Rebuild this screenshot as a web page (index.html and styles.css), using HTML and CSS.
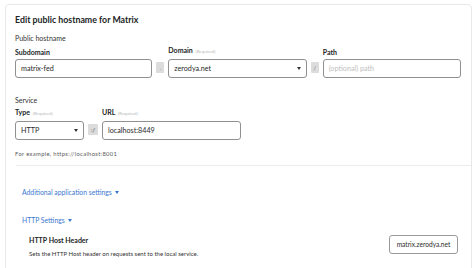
FILE: index.html
```html
<!DOCTYPE html>
<html>
<head>
<meta charset="utf-8">
<link rel="stylesheet" href="styles.css">
</head>
<body>
<div class="card">
  <h1 class="title">Edit public hostname for Matrix</h1>
  <div class="section-label">Public hostname</div>
  <div class="row">
    <div class="field w138">
      <label class="lbl">Subdomain</label>
      <div class="input">matrix-fed</div>
    </div>
    <div class="sep">.</div>
    <div class="field w139">
      <label class="lbl">Domain <span class="req">(Required)</span></label>
      <div class="input select">zerodya.net<span class="caret"></span></div>
    </div>
    <div class="sep">/</div>
    <div class="field w139">
      <label class="lbl">Path</label>
      <div class="input placeholder">(optional) path</div>
    </div>
  </div>

  <div class="section-label service">Service</div>
  <div class="row">
    <div class="field w69">
      <label class="lbl">Type <span class="req">(Required)</span></label>
      <div class="input select">HTTP<span class="caret"></span></div>
    </div>
    <div class="sep wide">://</div>
    <div class="field w139">
      <label class="lbl">URL <span class="req">(Required)</span></label>
      <div class="input">localhost:8449</div>
    </div>
  </div>
  <div class="hint">For example, https://localhost:8001</div>
  <hr class="divider">

  <div class="toggle first">Additional application settings <span class="tri"></span></div>
  <div class="toggle second">HTTP Settings <span class="tri"></span></div>

  <div class="setting">
    <div class="setting-text">
      <div class="setting-name">HTTP Host Header</div>
      <div class="setting-desc">Sets the HTTP Host header on requests sent to the local service.</div>
    </div>
    <div class="input small">matrix.zerodya.net</div>
  </div>
</div>
</body>
</html>
```
FILE: styles.css
```css
* { box-sizing: border-box; }
html, body { margin: 0; padding: 0; background: #fff; }
body {
  font-family: Lato, "Open Sans", sans-serif;
  color: #222426;
  width: 474px;
  height: 268px;
  overflow: hidden;
}
.card {
  margin: 4px 2px 0 5px;
  border: 1px solid #e8e8e8;
  border-radius: 4px;
  padding: 8px 10px 0 9px;
  height: 280px;
}
.title {
  margin: 0;
  font-size: 8.8px;
  font-weight: 700;
  line-height: 14px;
}
.section-label {
  font-size: 7px;
  line-height: 10px;
  margin-top: 6px;
  color: #333;
}
.section-label.service { margin-top: 17px; }
.row {
  display: flex;
  align-items: flex-end;
}
.field { display: flex; flex-direction: column; }
.w138 { width: 138px; }
.w139 { width: 139px; }
.w69 { width: 69px; }
.lbl {
  font-size: 7px;
  font-weight: 700;
  line-height: 10px;
  margin: 2px 0 2px 0;
  white-space: nowrap;
}
.req { font-weight: 400; font-size: 4.5px; color: #b8b8b8; margin-left: 1px; }
.input {
  height: 19px;
  border: 1px solid #909090;
  border-radius: 3px;
  font-size: 7.2px;
  line-height: 17px;
  padding: 0 5px;
  position: relative;
  white-space: nowrap;
  color: #2a2a2a;
}
.placeholder { color: #c0c0c0; font-size: 7.2px; }
.caret {
  position: absolute;
  right: 5px;
  top: 7px;
  width: 0; height: 0;
  border-left: 2px solid transparent;
  border-right: 2px solid transparent;
  border-top: 3px solid #333;
}
.sep {
  display: flex;
  align-items: center;
  justify-content: center;
  flex: none;
  width: 8px;
  height: 11px;
  margin: 0 4px 5px 4px;
  background: #dcdcdc;
  color: #7a7a7a;
  font-size: 6.5px;
  line-height: 11px;
  white-space: nowrap;
  border-radius: 1px;
}
.sep.wide { width: 10px; font-size: 6px; letter-spacing: -0.4px; margin: 0 4px 5px 4px; }
.hint {
  font-size: 5.8px;
  letter-spacing: 0.35px;
  color: #5a5a5a;
  margin-top: 10px;
  line-height: 8px;
}
.divider {
  border: 0;
  border-top: 1px solid #ececec;
  margin: 7px -10px 0 1px;
}
.toggle {
  color: #3b78d0;
  font-size: 6.8px;
  line-height: 10px;
  margin-left: 7px;
  display: flex;
  align-items: center;
  gap: 3px;
}
.toggle.first { margin-top: 21px; }
.toggle.second { margin-top: 18px; }
.tri {
  display: inline-block;
  width: 0; height: 0;
  border-left: 2.5px solid transparent;
  border-right: 2.5px solid transparent;
  border-top: 3px solid #3b78d0;
}
.setting {
  display: flex;
  justify-content: space-between;
  align-items: flex-start;
  margin: 10px 3px 0 14px;
}
.setting-name { font-size: 7px; font-weight: 700; line-height: 10px; }
.setting-desc { font-size: 6px; color: #333; line-height: 8px; margin-top: 5px; }
.input.small {
  width: 69px;
  border-color: #9a9a9a;
  font-size: 6.6px;
  padding: 0 4px;
  text-align: center;
}
```
